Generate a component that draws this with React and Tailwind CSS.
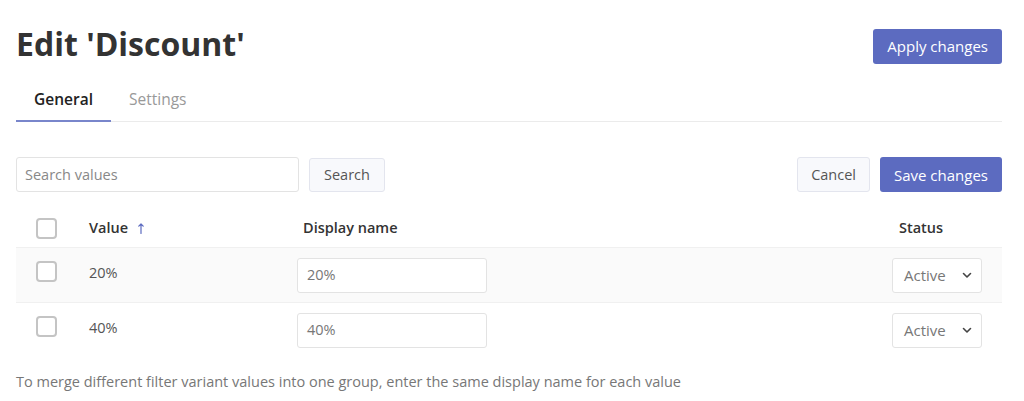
import React from 'react'

const font = { fontFamily: '"Segoe UI", "Open Sans", "Noto Sans", sans-serif' }

function Checkbox() {
  return <span className="block w-[21px] h-[21px] rounded-[4px] border-2 border-[#c4c4c4] bg-white" />
}

function StatusSelect() {
  return (
    <div className="flex items-center justify-between w-[90px] h-[35px] border border-[#e3e3e3] rounded-[3px] bg-white pl-[11px] pr-[8px] text-[15px] text-[#777]">
      <span>Active</span>
      <svg width="12" height="12" viewBox="0 0 12 12" fill="none">
        <path d="M2.5 4.5 6 8l3.5-3.5" stroke="#444" strokeWidth="1.6" strokeLinecap="round" strokeLinejoin="round" />
      </svg>
    </div>
  )
}

function Row({ value, shaded }) {
  return (
    <div className={`flex items-center h-[55px] border-t border-[#f0f0f0] ${shaded ? 'bg-[#fafafa]' : 'bg-white'}`}>
      <div className="w-[73px] pl-[20px] -mt-[8px]">
        <Checkbox />
      </div>
      <div className="w-[208px] text-[14.5px] text-[#555] -mt-[5px]">{value}</div>
      <div className="flex-1">
        <div className="w-[190px] h-[35px] border border-[#e3e3e3] rounded-[3px] bg-white px-[9px] flex items-center text-[14.5px] text-[#777]">
          {value}
        </div>
      </div>
      <div className="w-[110px]">
        <StatusSelect />
      </div>
    </div>
  )
}

export default function App() {
  return (
    <div className="bg-white w-[1024px] h-[401px] pl-4 pr-[22px] text-[#333]" style={font}>
      <div className="flex justify-between items-start pt-[24px]">
        <h1 className="text-[32px] font-bold leading-[40px] text-[#333]">Edit 'Discount'</h1>
        <button className="mt-[5px] h-[35px] px-[14px] rounded-[3px] bg-[#5c6bc0] text-white text-[15px]">
          Apply changes
        </button>
      </div>

      <div className="flex mt-[24px] border-b border-[#ebebeb] text-[15.5px]">
        <div className="px-[18px] pb-[9px] border-b-2 border-[#7986cb] -mb-px font-semibold text-[#222]">General</div>
        <div className="px-[18px] pb-[9px] text-[#999]">Settings</div>
      </div>

      <div className="flex items-center justify-between mt-[35px]">
        <div className="flex items-center gap-[10px]">
          <div className="w-[283px] h-[35px] border border-[#e3e3e3] rounded-[3px] px-[8px] flex items-center text-[14.5px] text-[#888]">
            Search values
          </div>
          <button className="h-[34px] px-[14px] border border-[#e3e5ee] rounded-[3px] bg-[#f8f9fc] text-[14.5px] text-[#555]">
            Search
          </button>
        </div>
        <div className="flex items-center gap-[10px]">
          <button className="h-[35px] px-[13px] border border-[#e3e5ee] rounded-[3px] bg-[#f8f9fc] text-[14.5px] text-[#555]">
            Cancel
          </button>
          <button className="h-[35px] px-[14px] rounded-[3px] bg-[#5c6bc0] text-white text-[15px]">
            Save changes
          </button>
        </div>
      </div>

      <div className="mt-[20px]">
        <div className="flex items-center h-[32px] text-[14.5px] font-semibold text-[#333]">
          <div className="w-[73px] pl-[20px]">
            <Checkbox />
          </div>
          <div className="w-[214px] flex items-center gap-[10px]">
            Value
            <svg width="6" height="11" viewBox="0 0 6 11" fill="none">
              <path d="M3 10.5V1M0.8 3.2 3 1l2.2 2.2" stroke="#5c6bc0" strokeWidth="1.2" strokeLinecap="round" strokeLinejoin="round" />
            </svg>
          </div>
          <div className="flex-1">Display name</div>
          <div className="w-[103px]">Status</div>
        </div>
        <div className="mt-[3px]">
          <Row value="20%" shaded />
          <Row value="40%" />
        </div>
      </div>

      <p className="mt-[14px] text-[14.5px] text-[#777]">
        To merge different filter variant values into one group, enter the same display name for each value
      </p>
    </div>
  )
}
